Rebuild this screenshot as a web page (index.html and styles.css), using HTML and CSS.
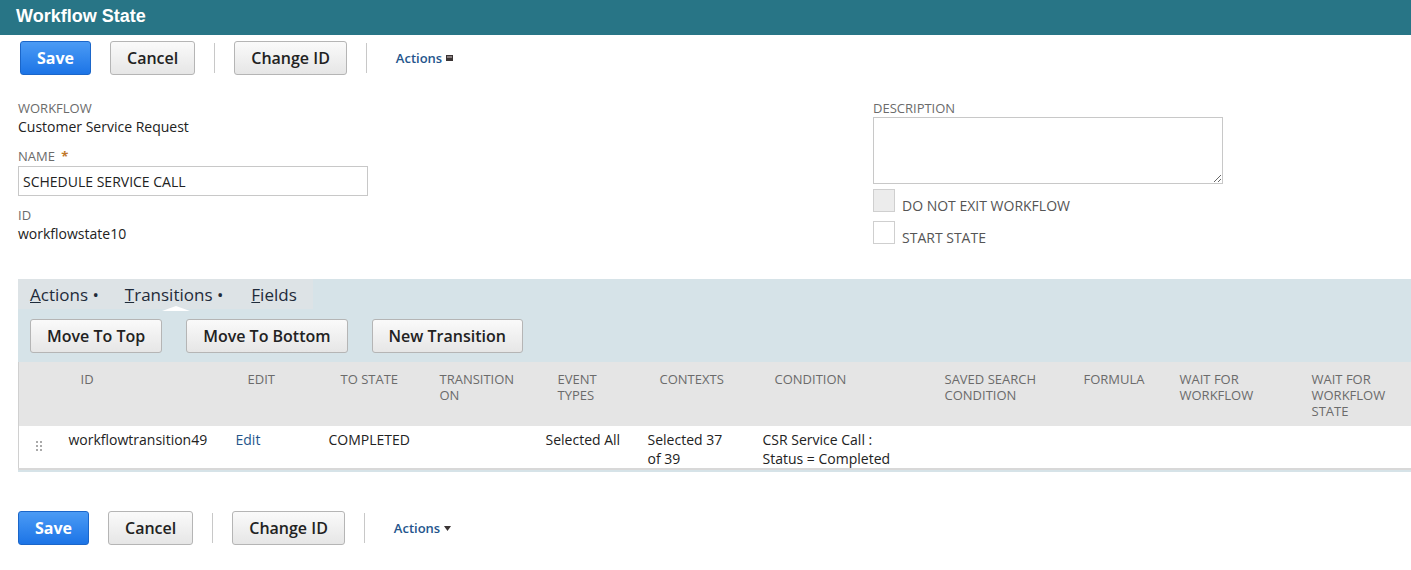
FILE: index.html
```html
<!DOCTYPE html>
<html lang="en">
<head>
    <meta charset="UTF-8">
    <title>Workflow State</title>
    <link rel="stylesheet" href="styles.css">
</head>
<body>
    <div class="page-title">Workflow State</div>

    <div class="toolbar top">
        <button class="btn primary">Save</button>
        <button class="btn">Cancel</button>
        <span class="sep"></span>
        <button class="btn">Change ID</button>
        <span class="sep"></span>
        <a class="actions-menu" href="#">Actions
            <svg width="7" height="6" viewBox="0 0 7 6"><rect width="7" height="6" fill="#3a3434"/><rect x="1" y="1" width="5" height="2" fill="#8a8080"/></svg>
        </a>
    </div>

    <div class="form">
        <div class="col">
            <div class="field">
                <div class="label">WORKFLOW</div>
                <div class="value">Customer Service Request</div>
            </div>
            <div class="field">
                <div class="label">NAME <span class="req">*</span></div>
                <input class="text-input" type="text" value="SCHEDULE SERVICE CALL">
            </div>
            <div class="field">
                <div class="label">ID</div>
                <div class="value">workflowstate10</div>
            </div>
        </div>
        <div class="col right">
            <div class="field">
                <div class="label">DESCRIPTION</div>
                <textarea class="text-area"></textarea>
            </div>
            <label class="check">
                <span class="box disabled"></span>
                <span class="check-label">DO NOT EXIT WORKFLOW</span>
            </label>
            <label class="check">
                <span class="box"></span>
                <span class="check-label">START STATE</span>
            </label>
        </div>
    </div>

    <div class="subtabs">
        <div class="tab-strip">
            <span class="tab"><u>A</u>ctions •</span>
            <span class="tab active"><u>T</u>ransitions •</span>
            <span class="tab"><u>F</u>ields</span>
        </div>
        <div class="tab-buttons">
            <button class="btn">Move To Top</button>
            <button class="btn">Move To Bottom</button>
            <button class="btn">New Transition</button>
        </div>
        <table class="grid">
            <colgroup>
                <col style="width: 45px">
                <col style="width: 167px">
                <col style="width: 93px">
                <col style="width: 99px">
                <col style="width: 118px">
                <col style="width: 102px">
                <col style="width: 115px">
                <col style="width: 170px">
                <col style="width: 139px">
                <col style="width: 96px">
                <col style="width: 132px">
                <col>
            </colgroup>
            <thead>
                <tr>
                    <th></th>
                    <th>ID</th>
                    <th>EDIT</th>
                    <th>TO STATE</th>
                    <th>TRANSITION<br>ON</th>
                    <th>EVENT<br>TYPES</th>
                    <th>CONTEXTS</th>
                    <th>CONDITION</th>
                    <th>SAVED SEARCH<br>CONDITION</th>
                    <th>FORMULA</th>
                    <th>WAIT FOR<br>WORKFLOW</th>
                    <th>WAIT FOR<br>WORKFLOW<br>STATE</th>
                </tr>
            </thead>
            <tbody>
                <tr>
                    <td class="handle"><span class="dots"></span></td>
                    <td>workflowtransition49</td>
                    <td><a href="#">Edit</a></td>
                    <td>COMPLETED</td>
                    <td></td>
                    <td>Selected All</td>
                    <td>Selected 37<br>of 39</td>
                    <td>CSR Service Call :<br>Status = Completed</td>
                    <td></td>
                    <td></td>
                    <td></td>
                    <td></td>
                </tr>
            </tbody>
        </table>
    </div>

    <div class="toolbar bottom">
        <button class="btn primary">Save</button>
        <button class="btn">Cancel</button>
        <span class="sep"></span>
        <button class="btn">Change ID</button>
        <span class="sep"></span>
        <a class="actions-menu" href="#">Actions
            <svg width="7" height="6" viewBox="0 0 7 6"><path d="M0 1h7L3.5 6z" fill="#3a3434"/></svg>
        </a>
    </div>
</body>
</html>
```

FILE: styles.css
```css
body {
    margin: 0;
    font-family: "Open Sans", "Liberation Sans", sans-serif;
    font-size: 14px;
    color: #222;
    background: white;
    overflow: hidden;
}
.page-title {
    height: 35px;
    line-height: 33px;
    padding-left: 16px;
    background: #287586;
    color: white;
    font-family: "Liberation Sans", Arial, sans-serif;
    font-weight: bold;
    font-size: 18px;
}
.toolbar {
    display: flex;
    align-items: center;
    height: 34px;
}
.toolbar.top {
    margin: 6px 0 0 20px;
}
.toolbar.bottom {
    margin: 39px 0 0 18px;
}
.btn {
    height: 34px;
    padding: 0 16px;
    font-family: "Open Sans", sans-serif;
    font-size: 16px;
    font-weight: 600;
    color: #222;
    background: linear-gradient(#fafafa, #e6e6e6);
    border: 1px solid #b5b5b5;
    border-radius: 3px;
    margin-right: 19px;
}
.btn.primary {
    color: white;
    font-weight: bold;
    background: linear-gradient(#4b9bf5, #1c74e6);
    border-color: #1b66c9;
}
.sep {
    width: 1px;
    height: 30px;
    background: #c8c8c8;
    margin-right: 19px;
}
.actions-menu {
    margin-left: 10px;
    font-size: 13px;
    font-weight: 600;
    color: #24558c;
    text-decoration: none;
    display: flex;
    align-items: center;
    gap: 4px;
}
.form {
    display: flex;
    padding: 0 18px;
    margin-top: 24px;
    height: 180px;
}
.col {
    width: 855px;
}
.col.right {
    width: 350px;
}
.field {
    margin-bottom: 10px;
}
.label {
    font-size: 13px;
    color: #6b6b6b;
    line-height: 18px;
}
.req {
    color: #c0782a;
    font-weight: bold;
    margin-left: 3px;
}
.value {
    line-height: 20px;
}
.text-input {
    display: block;
    width: 350px;
    height: 30px;
    box-sizing: border-box;
    border: 1px solid #c8c8c8;
    padding: 0 4px;
    font-family: "Open Sans", sans-serif;
    font-size: 14px;
    color: #222;
    margin: 1px 0 0;
}
.text-area {
    display: block;
    width: 350px;
    height: 67px;
    box-sizing: border-box;
    border: 1px solid #c8c8c8;
    margin: 0;
}
.col.right .field {
    margin-bottom: 6px;
}
.check {
    display: flex;
    align-items: flex-end;
    height: 22px;
    margin-bottom: 10px;
}
.box {
    width: 20px;
    height: 21px;
    border: 1px solid #cfcfcf;
    background: white;
}
.box.disabled {
    background: #ececec;
}
.check-label {
    font-size: 14px;
    color: #555;
    margin-left: 7px;
    line-height: 12px;
}
.subtabs {
    margin: 0 0 0 18px;
    background: #d6e3e8;
    padding-bottom: 2px;
}
.tab-strip {
    display: flex;
    width: max-content;
    height: 30px;
    background: #dde3e6;
    align-items: center;
    padding-right: 2px;
}
.tab {
    position: relative;
    flex-shrink: 0;
    white-space: nowrap;
    font-size: 17px;
    color: #1f2b3a;
    margin-left: 12px;
    margin-right: 14px;
}
.tab.active {
    margin-right: 16px;
}
.tab.active::after {
    content: "";
    position: absolute;
    left: 37px;
    bottom: -5px;
    width: 0;
    border-left: 14px solid transparent;
    border-right: 14px solid transparent;
    border-bottom: 5px solid white;
}
.tab-buttons {
    display: flex;
    padding: 10px 0 9px 12px;
}
.tab-buttons .btn {
    margin-right: 0;
}
.tab-buttons .btn + .btn {
    margin-left: 24px;
}
.grid {
    width: 100%;
    border-collapse: collapse;
    table-layout: fixed;
    background: white;
    border-left: 1px solid #d0d0d0;
    border-bottom: 2px solid #d8d8d8;
}
.grid th {
    background: #e5e5e5;
    height: 64px;
    box-sizing: border-box;
    vertical-align: top;
    text-align: left;
    font-weight: normal;
    font-size: 13px;
    color: #6b6b6b;
    line-height: 16px;
    padding: 9px 0 0 17px;
}
.grid td {
    vertical-align: top;
    padding: 4px 0 0 5px;
    height: 43px;
    box-sizing: border-box;
    line-height: 19px;
}
.grid a {
    color: #24558c;
    text-decoration: none;
}
.grid td.handle {
    padding: 14px 0 0 16px;
}
.dots {
    display: block;
    width: 8px;
    height: 12px;
    background: radial-gradient(circle, #aaa 1px, transparent 1.3px) 0 0 / 4px 4px;
}
```
